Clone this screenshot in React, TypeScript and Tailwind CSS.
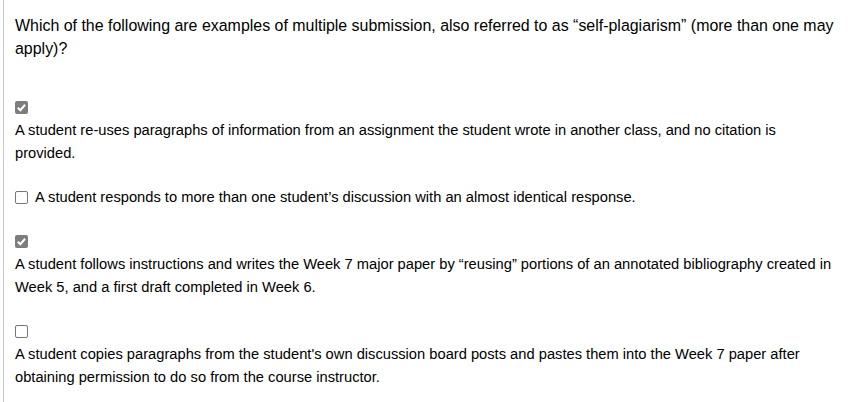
import React from "react";

type Option = {
  text: string;
  checked: boolean;
  inline?: boolean;
};

const options: Option[] = [
  {
    text: "A student re-uses paragraphs of information from an assignment the student wrote in another class, and no citation is provided.",
    checked: true,
  },
  {
    text: "A student responds to more than one student\u2019s discussion with an almost identical response.",
    checked: false,
    inline: true,
  },
  {
    text: "A student follows instructions and writes the Week 7 major paper by \u201creusing\u201d portions of an annotated bibliography created in Week 5, and a first draft completed in Week 6.",
    checked: true,
  },
  {
    text: "A student copies paragraphs from the student's own discussion board posts and pastes them into the Week 7 paper after obtaining permission to do so from the course instructor.",
    checked: false,
  },
];

function Box({ checked }: { checked: boolean }) {
  if (checked) {
    return (
      <span className="inline-flex h-[13px] w-[13px] items-center justify-center rounded-[2px] bg-[#7d7d7d]">
        <svg viewBox="0 0 12 12" className="h-[11px] w-[11px]">
          <path d="M2 6.2 L4.7 8.9 L9.9 3" fill="none" stroke="white" strokeWidth="2.2" />
        </svg>
      </span>
    );
  }
  return <span className="inline-block h-[13px] w-[13px] rounded-[2px] border border-[#767676] bg-white" />;
}

export default function App() {
  return (
    <div className="min-h-[402px] w-[857px] bg-white font-['Liberation_Sans',Arial,sans-serif] text-black">
      <div className="ml-[3px] min-h-[402px] border-l border-[#c7c7c7] pl-[11px] pt-[14px]">
        <div className="w-[822px]">
          <p className="text-[15.95px] leading-[23px]">
            Which of the following are examples of multiple submission, also referred to as “self-plagiarism” (more than one may apply)?
          </p>
          <div className="mt-[36px] flex flex-col gap-[21px] text-[14.7px] leading-[23px]">
            {options.map((o, i) =>
              o.inline ? (
                <div key={i} className="flex items-center gap-[7px]">
                  <Box checked={o.checked} />
                  <span>{o.text}</span>
                </div>
              ) : (
                <div key={i}>
                  <div className="flex h-[23px] items-center">
                    <Box checked={o.checked} />
                  </div>
                  <p>{o.text}</p>
                </div>
              )
            )}
          </div>
        </div>
      </div>
    </div>
  );
}
